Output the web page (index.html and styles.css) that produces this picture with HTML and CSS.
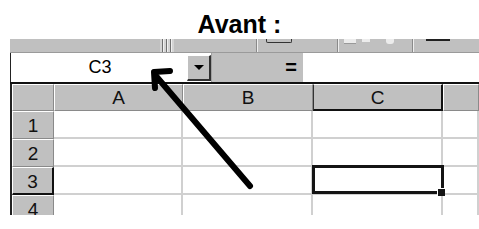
FILE: index.html
```html
<!DOCTYPE html>
<html lang="fr">
<head>
<meta charset="utf-8">
<title>Avant</title>
<link rel="stylesheet" href="styles.css">
</head>
<body>
<div class="page">
  <div class="title">Avant :</div>
  <div class="sheet">
    <div class="toolbar">
      <div class="splitter"><span></span><span></span><span></span></div>
      <div class="sep sep1"></div>
      <div class="tbox"></div>
      <div class="sep sep2"></div>
      <div class="ticon ticon1"></div>
      <div class="ticon ticon2"></div>
      <div class="ticon ticon3"></div>
      <div class="sep sep3"></div>
      <div class="tdark"></div>
    </div>
    <div class="formula">
      <div class="namebox">C3</div>
      <div class="dropbtn"><span class="tri"></span></div>
      <div class="eqarea">=</div>
      <div class="input"></div>
    </div>
    <div class="grid">
      <div class="hd corner"></div>
      <div class="hd col">A</div>
      <div class="hd col">B</div>
      <div class="hd col colsel">C</div>
      <div class="hd col"></div>

      <div class="hd row">1</div>
      <div class="cell"></div><div class="cell"></div><div class="cell"></div><div class="cell"></div>

      <div class="hd row">2</div>
      <div class="cell"></div><div class="cell"></div><div class="cell"></div><div class="cell"></div>

      <div class="hd row rowsel">3</div>
      <div class="cell"></div><div class="cell"></div><div class="cell active"></div><div class="cell"></div>

      <div class="hd row">4</div>
      <div class="cell"></div><div class="cell"></div><div class="cell"></div><div class="cell"></div>
    </div>
  </div>
  <svg class="arrow" width="479" height="229" viewBox="0 0 479 229">
    <line x1="156" y1="76" x2="250" y2="186" stroke="#000" stroke-width="6" stroke-linecap="round"/>
    <polyline points="170,71 154,72 155,88" fill="none" stroke="#000" stroke-width="6" stroke-linecap="round" stroke-linejoin="round"/>
  </svg>
</div>
</body>
</html>
```

FILE: styles.css
```css
html, body {
  margin: 0;
  padding: 0;
  background: #fff;
}

.page {
  position: relative;
  width: 479px;
  height: 229px;
  overflow: hidden;
  font-family: "Liberation Sans", Arial, sans-serif;
  color: #000;
}

.title {
  box-sizing: border-box;
  height: 39px;
  padding-top: 9px;
  line-height: 30px;
  font-size: 25px;
  font-weight: 700;
  text-align: center;
}

.sheet {
  margin-left: 10px;
}

/* toolbar strip */
.toolbar {
  height: 13px;
  background: #c0c0c0;
  border-bottom: 1px solid #9a9a9a;
  display: flex;
  align-items: flex-start;
}

.splitter {
  margin-left: 150px;
  width: 14px;
  height: 13px;
  background: #d4d4d4;
  display: flex;
  justify-content: center;
  gap: 2px;
}
.splitter span {
  width: 1px;
  height: 13px;
  background: #707070;
  border-right: 1px solid #f0f0f0;
}

.sep {
  width: 1px;
  height: 13px;
  background: #8a8a8a;
  border-right: 1px solid #eeeeee;
}
.sep1 { margin-left: 82px; }
.sep2 { margin-left: 45px; }
.sep3 { margin-left: 18px; }

.tbox {
  margin-left: 8px;
  width: 24px;
  height: 3px;
  border: 1px solid #333;
  border-top: none;
  border-radius: 0 0 2px 2px;
}

.ticon {
  height: 3px;
  background: #ececec;
}
.ticon1 { margin-left: 5px; width: 12px; height: 4px; border-bottom: 1px solid #999; }
.ticon2 { margin-left: 6px; width: 8px; }
.ticon3 { margin-left: 16px; width: 8px; height: 5px; border-radius: 0 0 3px 3px; }

.tdark {
  margin-left: 12px;
  width: 24px;
  height: 2px;
  background: #202020;
}

/* formula bar */
.formula {
  height: 29px;
  display: flex;
  border-bottom: 2px solid #111;
}

.namebox {
  box-sizing: border-box;
  width: 177px;
  background: #fff;
  border-left: 1px solid #222;
  text-align: center;
  font-size: 18px;
  line-height: 29px;
  padding-left: 2px;
}

.dropbtn {
  box-sizing: border-box;
  width: 24px;
  height: 26px;
  margin-top: 2px;
  background: #c0c0c0;
  border-top: 1px solid #fff;
  border-left: 1px solid #fff;
  border-right: 2px solid #303030;
  border-bottom: 2px solid #303030;
  display: flex;
  align-items: center;
  justify-content: center;
}
.tri {
  width: 0;
  height: 0;
  border-left: 5px solid transparent;
  border-right: 5px solid transparent;
  border-top: 5px solid #000;
}

.eqarea {
  box-sizing: border-box;
  width: 92px;
  background: #c0c0c0;
  border-left: 1px solid #a0a0a0;
  text-align: right;
  padding-right: 6px;
  font-size: 20px;
  font-weight: 700;
  line-height: 29px;
}

.input {
  flex: 1;
  background: #fff;
}

/* grid */
.grid {
  height: 131px;
  overflow: hidden;
  border-left: 2px solid #222;
  display: grid;
  grid-template-columns: 42px 129px 130px 130px 1fr;
  grid-template-rows: 27px 28px 28px 28px 28px;
}

.hd {
  box-sizing: border-box;
  background: #c0c0c0;
  border-top: 1px solid #fff;
  border-left: 1px solid #fff;
  border-right: 1px solid #8a8a8a;
  border-bottom: 1px solid #8a8a8a;
  text-align: center;
  font-size: 19px;
  line-height: 25px;
  color: #111;
}

.colsel {
  border-left: 1px solid #333;
  border-right: 2px solid #111;
  border-bottom: 2px solid #111;
}

.rowsel {
  border-right: 2px solid #111;
  border-bottom: 2px solid #111;
}

.row {
  line-height: 27px;
}

.cell {
  box-sizing: border-box;
  background: #fff;
  border-right: 2px solid #d0d0d0;
  border-bottom: 2px solid #d0d0d0;
}

.active {
  position: relative;
}
.active::after {
  content: "";
  position: absolute;
  left: -1px;
  top: -2px;
  right: -3px;
  bottom: -1px;
  border: 3px solid #141414;
}
.active::before {
  content: "";
  position: absolute;
  right: -4px;
  bottom: -3px;
  width: 7px;
  height: 7px;
  background: #141414;
  border-top: 1px solid #fff;
  border-left: 1px solid #fff;
  z-index: 1;
}

.arrow {
  position: absolute;
  left: 0;
  top: 0;
}
```
